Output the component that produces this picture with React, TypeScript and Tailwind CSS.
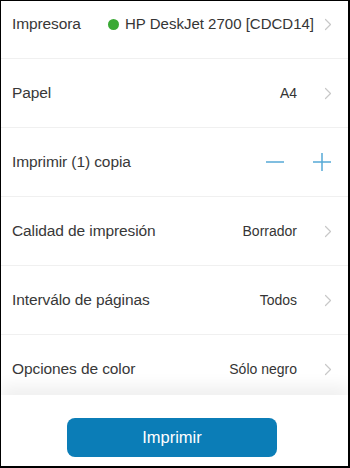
import React from 'react';

type Row = {
    label: string;
    value?: string;
    dot?: boolean;
    stepper?: boolean;
    wide?: boolean;
};

const rows: Row[] = [
    { label: 'Impresora', value: 'HP DeskJet 2700 [CDCD14]', dot: true, wide: true },
    { label: 'Papel', value: 'A4' },
    { label: 'Imprimir (1) copia', stepper: true },
    { label: 'Calidad de impresión', value: 'Borrador' },
    { label: 'Interválo de páginas', value: 'Todos' },
    { label: 'Opciones de color', value: 'Sólo negro' },
];

function Chevron() {
    return (
        <svg className="w-[8px] h-[13px]" viewBox="0 0 8 13" fill="none">
            <path d="M1.5 1.5 L6.5 6.5 L1.5 11.5" stroke="#c8c8c8" strokeWidth="1.2" strokeLinecap="round" strokeLinejoin="round" />
        </svg>
    );
}

function Stepper() {
    return (
        <div className="flex items-center">
            <svg className="w-[20px] h-[20px]" viewBox="0 0 20 20">
                <path d="M1 10 H19" stroke="#56a9d6" strokeWidth="1.5" />
            </svg>
            <svg className="w-[20px] h-[20px] ml-[27px]" viewBox="0 0 20 20">
                <path d="M1 10 H19 M10 1 V19" stroke="#56a9d6" strokeWidth="1.5" />
            </svg>
        </div>
    );
}

export default function App() {
    return (
        <div
            className="w-[350px] h-[468px] bg-white border-l border-t border-r-2 border-b-2 border-black overflow-hidden flex flex-col relative"
            style={{ fontFamily: '"Liberation Sans", Arial, sans-serif' }}
        >
            {/* Settings list */}
            <div className="-mt-[11px] flex flex-col">
                {rows.map((r, i) => (
                    <div
                        key={i}
                        className="h-[69px] shrink-0 flex items-center border-b border-[#f0f0f0] pl-[11px] pr-[16px]"
                    >
                        <span className="text-[15.5px] text-[#383838] tracking-[-0.1px]">{r.label}</span>
                        <div className="ml-auto flex items-center">
                            {r.stepper ? (
                                <Stepper />
                            ) : (
                                <>
                                    {r.dot && <span className="w-[11px] h-[11px] rounded-full bg-[#3aa935] mr-[6px]" />}
                                    <span className={r.wide ? 'text-[15px] text-[#353535]' : 'text-[14px] text-[#353535]'}>{r.value}</span>
                                    <div className={r.wide ? 'ml-[10px]' : 'ml-[27px]'}>
                                        <Chevron />
                                    </div>
                                </>
                            )}
                        </div>
                    </div>
                ))}
            </div>

            {/* Bottom action bar */}
            <div className="absolute left-0 right-0 bottom-0 h-[71px] bg-white shadow-[0_-10px_14px_rgba(0,0,0,0.06)] pt-[23px] pl-[66px]">
                <button className="w-[210px] h-[39px] rounded-[8px] bg-[#0b7db7] text-white text-[16.5px] font-medium">
                    Imprimir
                </button>
            </div>
        </div>
    );
}
